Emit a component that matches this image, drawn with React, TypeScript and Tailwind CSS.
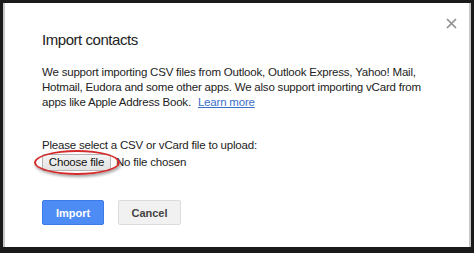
import React from "react";

export default function App() {
  return (
    <div className="w-[474px] h-[253px] bg-[#1a1a1a] pt-[3px] pl-[3px] pr-[3px] pb-[6px]" style={{ fontFamily: '"Liberation Sans", Arial, sans-serif' }}>
      <div className="relative w-full h-full bg-white border-l-2 border-r-2 border-[#c8c8c8] text-[#222]">
        <div className="absolute right-[12px] top-[15px]">
          <svg width="11" height="11" viewBox="0 0 11 11">
            <path d="M1 1 L10 10 M10 1 L1 10" stroke="#8f8f8f" strokeWidth="1.7" />
          </svg>
        </div>
        <div className="pl-[37px] pr-[20px] pt-[28px]">
          <h1 className="text-[15px] leading-[18px] tracking-[-0.45px] text-[#222]">Import contacts</h1>
          <div className="mt-[16px] text-[11.5px] leading-[15px] tracking-[-0.2px] text-[#222]">
            <div>We support importing CSV files from Outlook, Outlook Express, Yahoo! Mail,</div>
            <div>Hotmail, Eudora and some other apps. We also support importing vCard from</div>
            <div className="flex gap-[7px]">
              <span>apps like Apple Address Book.</span>
              <span className="text-[#3b6fc6] underline">Learn more</span>
            </div>
          </div>
          <div className="mt-[28px] text-[11.5px] leading-[15px] tracking-[-0.2px]">Please select a CSV or vCard file to upload:</div>
          <div className="relative mt-[1px] flex items-center gap-[5px] text-[11.5px] tracking-[-0.2px]">
            <button className="h-[17px] w-[69px] bg-[linear-gradient(#f3f3f3,#e3e3e3)] border border-[#b5b5b5] rounded-[2px] text-[11.5px] leading-[15px] tracking-[-0.2px] text-[#111]">Choose file</button>
            <span>No file chosen</span>
            <div className="absolute left-[-8px] top-[-4px] w-[86px] h-[25px] rounded-[50%] border-2 border-[#d42a2a] shadow-[1px_2px_3px_rgba(0,0,0,0.35)]" />
          </div>
          <div className="mt-[29px] flex gap-[14px]">
            <button className="w-[62px] h-[25px] rounded-[2px] bg-[#4d8cf5] border border-[#3b7ae8] text-white text-[11px] font-bold">Import</button>
            <button className="w-[63px] h-[25px] rounded-[2px] bg-[#f1f1f1] border border-[#dcdcdc] text-[#444] text-[11px] font-bold">Cancel</button>
          </div>
        </div>
      </div>
    </div>
  );
}
